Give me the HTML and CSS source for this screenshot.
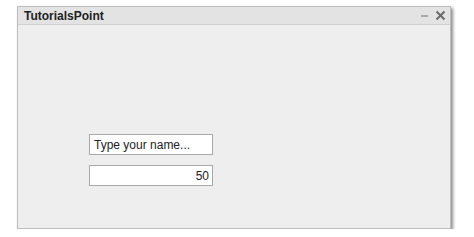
FILE: index.html
```html
<!DOCTYPE html>
<html>
<head>
<meta charset="utf-8">
<link rel="stylesheet" href="styles.css">
</head>
<body>
<div class="window">
  <div class="titlebar">
    <span class="title">TutorialsPoint</span>
    <span class="controls">
      <svg class="min" width="9" height="9" viewBox="0 0 9 9"><path d="M1 5 H8" stroke="#8a8a8a" stroke-width="1.3"/></svg>
      <svg class="close" width="11" height="11" viewBox="0 0 11 11"><path d="M1.5 1.5 L9.5 9.5 M9.5 1.5 L1.5 9.5" stroke="#6a6a6a" stroke-width="2"/></svg>
    </span>
  </div>
  <div class="content">
    <input class="field" type="text" placeholder="Type your name...">
    <input class="field num" type="text" value="50">
  </div>
</div>
</body>
</html>
```
FILE: styles.css
```css
html, body {
  margin: 0;
  padding: 0;
  background: #ffffff;
}
body {
  padding: 6px 0 0 17px;
  font-family: "Liberation Sans", Arial, sans-serif;
}
.window {
  width: 432px;
  height: 221px;
  border: 1px solid #bdbdbd;
  background: #eeeeee;
  box-shadow: 2px 2px 3px rgba(0,0,0,0.45);
  display: flex;
  flex-direction: column;
}
.titlebar {
  height: 17px;
  background: #e3e3e3;
  border-bottom: 1px solid #d0d0d0;
  display: flex;
  align-items: center;
  justify-content: space-between;
  padding: 0 4px 0 6px;
}
.title {
  font-weight: bold;
  font-size: 12px;
  color: #222;
}
.controls {
  display: flex;
  align-items: center;
  gap: 6px;
}
.content {
  flex: 1;
  display: flex;
  flex-direction: column;
  align-items: flex-start;
  padding: 109px 0 0 71px;
  gap: 10px;
}
.field {
  box-sizing: border-box;
  width: 124px;
  height: 21px;
  margin: 0;
  border: 1px solid #a8a8a8;
  background: #ffffff;
  font-family: "Liberation Sans", Arial, sans-serif;
  font-size: 12px;
  padding: 0 4px;
  color: #222;
  outline: none;
}
.field::placeholder {
  color: #222;
}
.num {
  text-align: right;
  padding-right: 3px;
}
```
